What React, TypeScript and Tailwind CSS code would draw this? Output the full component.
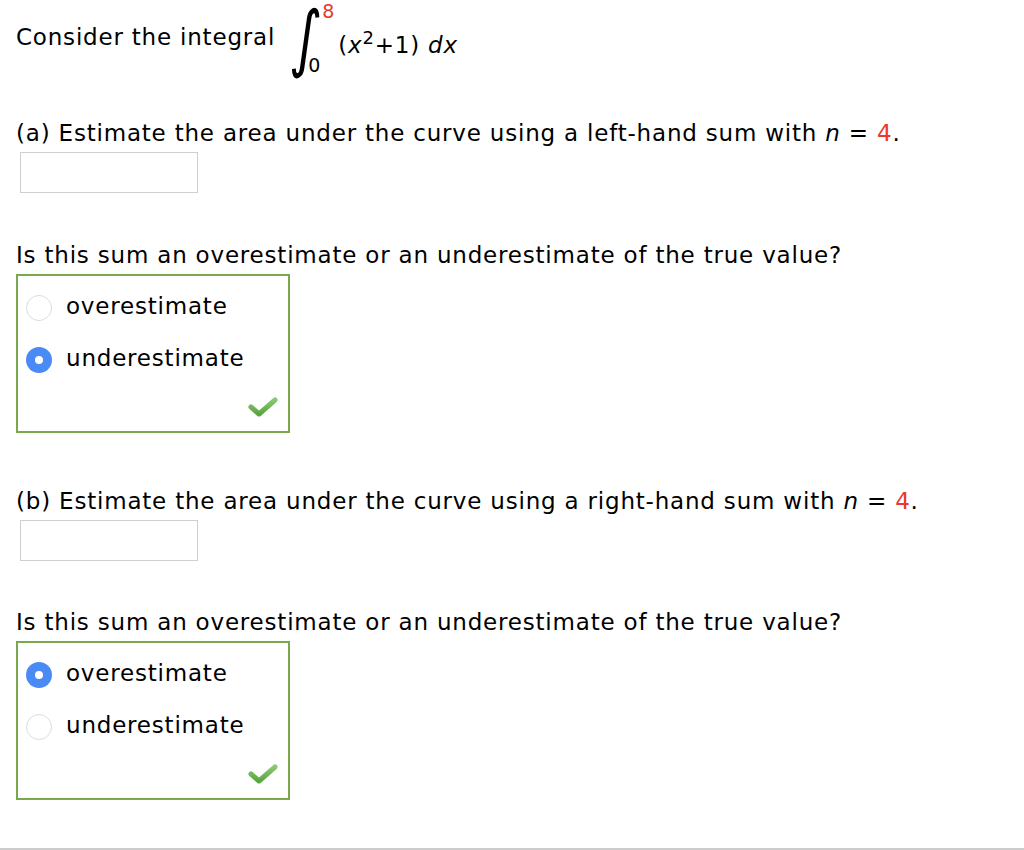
const Radio = ({ checked }: { checked: boolean }) =>
	checked ? (
		<span className="w-[26px] h-[26px] rounded-full bg-[#4a8af5] flex items-center justify-center shrink-0">
			<span className="w-[8px] h-[8px] rounded-full bg-white"></span>
		</span>
	) : (
		<span className="w-[26px] h-[26px] rounded-full border border-[#dcdcdc] bg-white shrink-0"></span>
	);

const Check = () => (
	<svg width="30" height="22" viewBox="0 0 30 22">
		<defs>
			<linearGradient id="ck" x1="0" y1="0" x2="0" y2="1">
				<stop offset="0" stopColor="#8cc873" />
				<stop offset="1" stopColor="#58a63e" />
			</linearGradient>
		</defs>
		<path d="M3 11 L11 18 L27 4" fill="none" stroke="url(#ck)" strokeWidth="5" strokeLinecap="round" strokeLinejoin="round" />
	</svg>
);

const Choices = ({ selected }: { selected: number }) => (
	<div className="w-[274px] h-[159px] border-2 border-[#7aa84f] pl-[8px] pt-[6px] flex flex-col">
		{["overestimate", "underestimate"].map((label, i) => (
			<div key={label} className="h-[52px] flex items-center gap-[14px]">
				<Radio checked={selected === i} />
				<span className="-mt-[4px]">{label}</span>
			</div>
		))}
		<div className="flex justify-end pr-[10px] mt-[10px]">
			<Check />
		</div>
	</div>
);

const Question = ({ part, side }: { part: string; side: string }) => (
	<p>
		({part}) Estimate the area under the curve using a {side}-hand sum with <i>n</i> = <span className="text-[#e8392b]">4</span>.
	</p>
);

const AnswerBox = () => <div className="w-[178px] h-[41px] border border-[#cfcfcf] ml-[4px] mt-[7px] bg-white"></div>;

export default function App() {
	return (
		<div className="h-[850px] flex flex-col bg-white text-black font-['DejaVu_Sans',sans-serif] text-[23px] tracking-[0.8px] leading-[24px]">
			<div className="pl-4 flex flex-col">
				<div className="h-[80px] flex items-center">
					<span className="-mt-[6px]">Consider the integral</span>
					<div className="ml-[16px] flex items-stretch h-[80px]">
						<span className="w-[30px] flex items-center justify-center text-[54px] leading-[80px] tracking-normal scale-y-[1.35] -skew-x-[8deg] -mt-[2px]">∫</span>
						<div className="flex flex-col justify-between text-[19px] leading-[20px] tracking-normal -ml-[13px]">
							<span className="text-[#e8392b] ml-[14px] mt-[1px]">8</span>
							<span className="mb-[5px]">0</span>
						</div>
						<span className="self-center ml-[4px] mt-[10px]">
							(<i>x</i><sup className="text-[18px]">2</sup>+1) <i>dx</i>
						</span>
					</div>
				</div>
				<div className="mt-[41px]">
					<Question part="a" side="left" />
					<AnswerBox />
				</div>
				<p className="mt-[50px]">Is this sum an overestimate or an underestimate of the true value?</p>
				<div className="mt-[7px]">
					<Choices selected={1} />
				</div>
				<div className="mt-[56px]">
					<Question part="b" side="right" />
					<AnswerBox />
				</div>
				<p className="mt-[49px]">Is this sum an overestimate or an underestimate of the true value?</p>
				<div className="mt-[7px]">
					<Choices selected={0} />
				</div>
			</div>
			<div className="mt-auto h-[2px] bg-[#cccccc]"></div>
		</div>
	);
}
